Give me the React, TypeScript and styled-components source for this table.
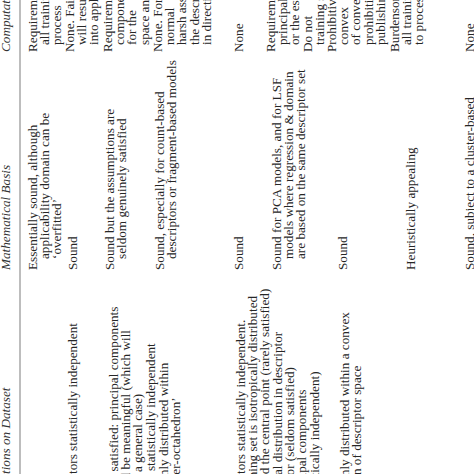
import styled, { createGlobalStyle } from 'styled-components';

type Cell = { paras: string[][]; drop?: number };
type RowData = { h: number; assum: Cell; math: Cell; comp: Cell };

const ROWS: RowData[] = [
  {
    h: 37,
    assum: { paras: [['None']] },
    math: {
      paras: [['Essentially sound, although', 'applicability domain can be', '\u2018overfitted\u2019']],
    },
    comp: { paras: [['Requirement for', 'all training data', 'process']] },
  },
  {
    h: 38,
    assum: { paras: [['Descriptors statistically independent']], drop: 3 },
    math: { paras: [['Sound']], drop: 3 },
    comp: { paras: [['None. Failure to', 'will result in', 'into applicability']] },
  },
  {
    h: 50,
    assum: {
      paras: [
        [
          'Seldom satisfied: principal components',
          'should be meaningful (which will',
          'not be a general case)',
        ],
        ['PCs are statistically independent'],
      ],
      drop: 6,
    },
    math: { paras: [['Sound but the assumptions are', 'seldom genuinely satisfied']], drop: 2 },
    comp: { paras: [['Requirement to compute', 'components', 'for the', 'space and']] },
  },
  {
    h: 81,
    assum: { paras: [['Uniformly distributed within', 'a \u2018hyper-octahedron\u2019']], drop: 6 },
    math: {
      paras: [['Sound, especially for count-based', 'descriptors or fragment-based models']],
      drop: 2,
    },
    comp: { paras: [['None. For', 'normal', 'harsh assumption', 'the descriptor', 'in direction']] },
  },
  {
    h: 32,
    assum: {
      paras: [
        [
          'Descriptors statistically independent.',
          'A training set is isotropically distributed',
          'Around the central point (rarely satisfied)',
        ],
      ],
      drop: 2,
    },
    math: { paras: [['Sound']] },
    comp: { paras: [['None']] },
  },
  {
    h: 61,
    assum: {
      paras: [
        [
          'A normal distribution in descriptor',
          'space or (seldom satisfied)',
          '(principal components',
          '(statistically independent)',
        ],
      ],
      drop: 7,
    },
    math: {
      paras: [
        [
          'Sound for PCA models, and for LSF',
          'models where regression & domain',
          'are based on the same descriptor set',
        ],
      ],
      drop: 6,
    },
    comp: {
      paras: [
        ['Requirement to compute', 'principal', 'or the estimation'],
        ['Do not', 'training set'],
      ],
    },
  },
  {
    h: 63,
    assum: {
      paras: [['Uniformly distributed within a convex', 'domain of descriptor space']],
      drop: 13,
    },
    math: { paras: [['Sound']], drop: 11 },
    comp: { paras: [['Prohibitive', 'convex', 'of convex', 'prohibitive', 'publishing']] },
  },
  {
    h: 75,
    assum: { paras: [['None']] },
    math: { paras: [['Heuristically appealing']], drop: 16 },
    comp: { paras: [['Burdensome', 'all training', 'to process']] },
  },
  {
    h: 30,
    assum: { paras: [['None']] },
    math: { paras: [['Sound, subject to a cluster-based']] },
    comp: { paras: [['None']] },
  },
];

const App = () => (
  <>
    <GlobalStyle />
    <Viewport>
      <Sheet>
        <HeaderRow>
          <HeaderCell>Assumptions on Dataset</HeaderCell>
          <HeaderCell>Mathematical Basis</HeaderCell>
          <HeaderCell>Computational Feasibility</HeaderCell>
        </HeaderRow>
        <Rule />
        {ROWS.map((row, i) => (
          <Row $h={row.h} key={i}>
            <TableCell cell={row.assum} indent={7} />
            <TableCell cell={row.math} indent={11} />
            <TableCell cell={row.comp} indent={7} />
          </Row>
        ))}
      </Sheet>
    </Viewport>
  </>
);

const TableCell = ({ cell, indent }: { cell: Cell; indent: number }) => (
  <CellBox $drop={cell.drop ?? 0}>
    {cell.paras.map((lines, p) => (
      <Para $indent={indent} key={p}>
        {lines.map((line, l) => (
          <span key={l}>
            {l > 0 && <br />}
            {line}
          </span>
        ))}
      </Para>
    ))}
  </CellBox>
);

export default App;

const GlobalStyle = createGlobalStyle`
  html, body {
    margin: 0;
    padding: 0;
    background: #ffffff;
  }
  body {
    font-family: 'Liberation Serif', 'Times New Roman', serif;
  }
`;

const Viewport = styled.div`
  width: 474px;
  height: 474px;
  overflow: hidden;
  background: #ffffff;
`;

/* the page is turned a quarter to the left, as in the scan */
const Sheet = styled.div`
  width: 760px;
  margin-top: 518px;
  transform-origin: 0 0;
  transform: rotate(-90deg);
  color: #262626;
  font-size: 13.2px;
  line-height: 12.3px;
`;

const Columns = styled.div`
  display: grid;
  grid-template-columns: 245px 218px 1fr;
`;

const HeaderRow = styled(Columns)`
  margin-top: -3px;
  font-style: italic;
  color: #333333;
`;

const HeaderCell = styled.div`
  white-space: nowrap;
`;

const Rule = styled.div`
  height: 1.5px;
  background: #bdbdbd;
  margin: 7px 0 6px;
`;

const Row = styled(Columns)<{ $h: number }>`
  height: ${({ $h }) => $h}px;
`;

const CellBox = styled.div<{ $drop: number }>`
  padding-top: ${({ $drop }) => $drop}px;
  white-space: nowrap;
`;

const Para = styled.div<{ $indent: number }>`
  padding-left: ${({ $indent }) => $indent}px;
  text-indent: -${({ $indent }) => $indent}px;
`;
